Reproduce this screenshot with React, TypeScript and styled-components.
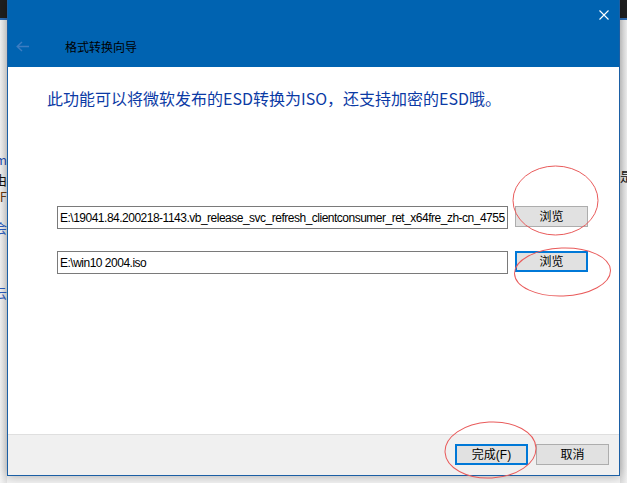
import {FC} from "react";
import styled, {createGlobalStyle} from "styled-components";

const GlobalStyle = createGlobalStyle`
  html, body {
    margin: 0;
    padding: 0;
    background: #ececec;
  }
`;

const Desk = styled.div`
  position: relative;
  width: 627px;
  height: 483px;
  overflow: hidden;
  font-family: "Liberation Sans", "Noto Sans CJK SC", sans-serif;
`;

// window lying behind the wizard, only its edges peek out
const BackWindow = styled.div`
  display: flex;
  flex-direction: column;
  height: 100%;
`;

const BackTopBar = styled.div`
  height: 18px;
  background: #1f1f1f;
`;

const BackBody = styled.div`
  flex: 1;
  display: flex;
  justify-content: space-between;
  border-top: 2px solid #2d6db5;
  background: #f2f2f2;
`;

const EdgeColumn = styled.div<{ $side: "left" | "right" }>`
  width: 7px;
  overflow: hidden;
  display: flex;
  flex-direction: column;
  font-family: "Noto Sans CJK SC", sans-serif;
  font-size: 13px;
  line-height: 14px;
  background: ${({$side}) => $side === "left"
    ? "linear-gradient(to right, #f4f4f4, #e2e2e2)"
    : "linear-gradient(to left, #f0f0f0, #dadada)"};
`;

const EdgeLine = styled.div<{ $top: number; $color: string; $side: "left" | "right" }>`
  display: flex;
  justify-content: ${({$side}) => $side === "left" ? "flex-end" : "flex-start"};
  margin-top: ${({$top}) => $top}px;
  white-space: nowrap;
  color: ${({$color}) => $color};
`;

const Dialog = styled.section`
  position: absolute;
  left: 7px;
  top: 0;
  width: 613px;
  height: 476px;
  box-sizing: border-box;
  border: 1px solid #1b5fa5;
  border-top: none;
  display: flex;
  flex-direction: column;
  background: #fff;
  box-shadow: 0 0 10px rgba(0, 0, 0, 0.3);
`;

const TitleBar = styled.header`
  height: 67px;
  flex-shrink: 0;
  background: #0063b1;
  display: flex;
  flex-direction: column;
`;

const CaptionRow = styled.div`
  height: 30px;
  display: flex;
  justify-content: flex-end;
`;

const CloseButton = styled.div`
  width: 30px;
  height: 30px;
  display: flex;
  align-items: center;
  justify-content: center;
`;

const NavRow = styled.div`
  height: 32px;
  display: flex;
  align-items: center;
`;

const BackButton = styled.div`
  width: 28px;
  display: flex;
  align-items: center;
  justify-content: center;
`;

const WizardTitle = styled.span`
  margin-left: 29px;
  font-family: "Noto Sans CJK SC", sans-serif;
  font-size: 12px;
  color: #000;
`;

const Body = styled.main`
  flex: 1;
  display: flex;
  flex-direction: column;
  padding-top: 20px;
`;

const Heading = styled.h1`
  margin: 0 0 0 39px;
  font-family: "Noto Sans CJK SC", sans-serif;
  font-weight: normal;
  font-size: 16px;
  line-height: 22px;
  color: #0b3aa5;
`;

const Fields = styled.div`
  margin-top: 97px;
  padding-left: 49px;
  display: flex;
  flex-direction: column;
  gap: 22px;
`;

const FieldRow = styled.div`
  display: flex;
  align-items: flex-start;
  gap: 7px;
`;

const PathInput = styled.input`
  width: 451px;
  height: 23px;
  box-sizing: border-box;
  margin: 0;
  padding: 0 2px;
  border: 1px solid #7a7a7a;
  border-radius: 0;
  outline: none;
  background: #fff;
  color: #000;
  font-family: "Liberation Sans", "Noto Sans CJK SC", sans-serif;
  font-size: 12px;
  letter-spacing: -0.5px;
`;

const Button = styled.button<{ $focused?: boolean }>`
  width: 73px;
  height: 21px;
  box-sizing: border-box;
  margin: 0;
  padding: 0;
  background: #e1e1e1;
  border: ${({$focused}) => $focused ? "2px solid #0078d7" : "1px solid #adadad"};
  border-radius: 0;
  color: #000;
  font-family: "Liberation Sans", "Noto Sans CJK SC", sans-serif;
  font-size: 12px;
  line-height: 1;
`;

const Footer = styled.footer`
  height: 41px;
  flex-shrink: 0;
  box-sizing: border-box;
  border-top: 1px solid #dfdfdf;
  background: #f0f0f0;
  display: flex;
  justify-content: flex-end;
  align-items: flex-start;
  gap: 8px;
  padding: 9px 10px 0 0;
`;

// hand-drawn red circles around the buttons
const Marks = styled.svg`
  position: absolute;
  left: 0;
  top: 0;
  pointer-events: none;
`;

const BackArrow: FC = () => (
  <svg width="13" height="11" viewBox="0 0 13 11">
    <path d="M6 1 L1.2 5.5 L6 10 M1.2 5.5 H13" fill="none" stroke="#3c7dc2" strokeWidth="1.4"/>
  </svg>
);

const CloseIcon: FC = () => (
  <svg width="10" height="10" viewBox="0 0 10 10">
    <path d="M0.5 0.5 L9.5 9.5 M9.5 0.5 L0.5 9.5" stroke="#fff" strokeWidth="1.1"/>
  </svg>
);

const leftEdge = [
  {top: 133, text: "m", color: "#1f4fb0"},
  {top: 6, text: "由", color: "#111"},
  {top: 3, text: "F", color: "#6a3b10"},
  {top: 17, text: "会", color: "#2a5cc0"},
  {top: 51, text: "云", color: "#2a5cc0"},
];

const App: FC = () => {
  return (
    <Desk>
      <GlobalStyle/>
      <BackWindow>
        <BackTopBar/>
        <BackBody>
          <EdgeColumn $side="left">
            {leftEdge.map((l, i) => (
              <EdgeLine key={i} $side="left" $top={l.top} $color={l.color}>{l.text}</EdgeLine>
            ))}
          </EdgeColumn>
          <EdgeColumn $side="right">
            <EdgeLine $side="right" $top={149} $color="#111">是</EdgeLine>
          </EdgeColumn>
        </BackBody>
      </BackWindow>

      <Dialog>
        <TitleBar>
          <CaptionRow>
            <CloseButton><CloseIcon/></CloseButton>
          </CaptionRow>
          <NavRow>
            <BackButton><BackArrow/></BackButton>
            <WizardTitle>格式转换向导</WizardTitle>
          </NavRow>
        </TitleBar>

        <Body>
          <Heading>此功能可以将微软发布的ESD转换为ISO，还支持加密的ESD哦。</Heading>
          <Fields>
            <FieldRow>
              <PathInput
                readOnly
                value="E:\19041.84.200218-1143.vb_release_svc_refresh_clientconsumer_ret_x64fre_zh-cn_47555a3d6e1e6ea0e0a7fa48d2b2c0e5.esd"
              />
              <Button>浏览</Button>
            </FieldRow>
            <FieldRow>
              <PathInput readOnly value="E:\win10 2004.iso"/>
              <Button $focused>浏览</Button>
            </FieldRow>
          </Fields>
        </Body>

        <Footer>
          <Button $focused>完成(F)</Button>
          <Button>取消</Button>
        </Footer>
      </Dialog>

      <Marks width="627" height="483" viewBox="0 0 627 483">
        <g fill="none" stroke="#e95b5b" strokeWidth="1">
          <ellipse cx="555.5" cy="200.5" rx="42.5" ry="34.5"/>
          <ellipse cx="562.5" cy="272" rx="48" ry="24" transform="rotate(-2 562.5 272)"/>
          <ellipse cx="490.5" cy="450" rx="45.5" ry="28" transform="rotate(-3 490.5 450)"/>
        </g>
      </Marks>
    </Desk>
  );
};

export default App;
